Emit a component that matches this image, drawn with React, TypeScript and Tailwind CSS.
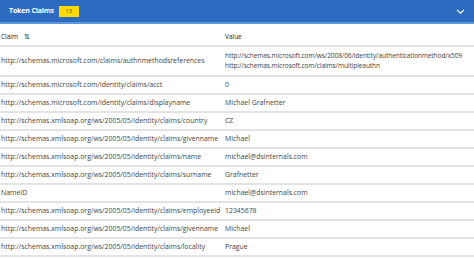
import React from 'react';

const rows: { claim: string; value: string[] }[] = [
  {
    claim: 'http://schemas.microsoft.com/claims/authnmethodsreferences',
    value: [
      'http://schemas.microsoft.com/ws/2008/06/identity/authenticationmethod/x509',
      'http://schemas.microsoft.com/claims/multipleauthn',
    ],
  },
  { claim: 'http://schemas.microsoft.com/identity/claims/acct', value: ['0'] },
  { claim: 'http://schemas.microsoft.com/identity/claims/displayname', value: ['Michael Grafnetter'] },
  { claim: 'http://schemas.xmlsoap.org/ws/2005/05/identity/claims/country', value: ['CZ'] },
  { claim: 'http://schemas.xmlsoap.org/ws/2005/05/identity/claims/givenname', value: ['Michael'] },
  { claim: 'http://schemas.xmlsoap.org/ws/2005/05/identity/claims/name', value: ['michael@dsinternals.com'] },
  { claim: 'http://schemas.xmlsoap.org/ws/2005/05/identity/claims/surname', value: ['Grafnetter'] },
  { claim: 'NameID', value: ['michael@dsinternals.com'] },
  { claim: 'http://schemas.xmlsoap.org/ws/2005/05/identity/claims/employeeid', value: ['12345678'] },
  { claim: 'http://schemas.xmlsoap.org/ws/2005/05/identity/claims/givenname', value: ['Michael'] },
  { claim: 'http://schemas.xmlsoap.org/ws/2005/05/identity/claims/locality', value: ['Prague'] },
];

export default function App() {
  return (
    <div className="w-[474px] h-[258px] overflow-hidden bg-white text-[#333] font-['Open_Sans',sans-serif]">
      {/* blue title bar */}
      <div className="h-[24px] bg-[#2d6bc0] border-b-2 border-[#5d98dc] flex items-center pl-[9px] pr-[9px]">
        <span className="text-white text-[7px] font-bold tracking-[-0.15px]">Token Claims</span>
        <span className="ml-[5px] bg-[#ffd800] text-[#555] text-[6px] w-[20px] h-[11px] flex items-center justify-center">13</span>
        <svg className="ml-auto" width="9" height="5" viewBox="0 0 9 5">
          <path d="M1 0.8l3.5 3.4 3.5-3.4" fill="none" stroke="#fff" strokeWidth="1.1" />
        </svg>
      </div>

      <div className="flex h-[23px] items-center border-b-2 border-[#e3e3e3] text-[6.5px] text-[#222] pl-[1px]">
        <div className="w-[224px] shrink-0 flex items-center gap-[6px] pt-[5px]">
          <span>Claim</span>
          <span className="text-[7px]">⇅</span>
        </div>
        <div className="pt-[5px]">Value</div>
      </div>

      {rows.map((r, i) => (
        <div key={i} className="flex items-center border-b-2 border-[#e3e3e3] text-[6.9px] text-[#444] pl-[1px] min-h-[18px]">
          <div className="w-[224px] shrink-0">{r.claim}</div>
          <div className={r.value.length > 1 ? 'py-[4px] leading-[10px] text-[6.6px] tracking-[-0.1px]' : ''}>
            {r.value.map((v, j) => (
              <div key={j}>{v}</div>
            ))}
          </div>
        </div>
      ))}
    </div>
  );
}
